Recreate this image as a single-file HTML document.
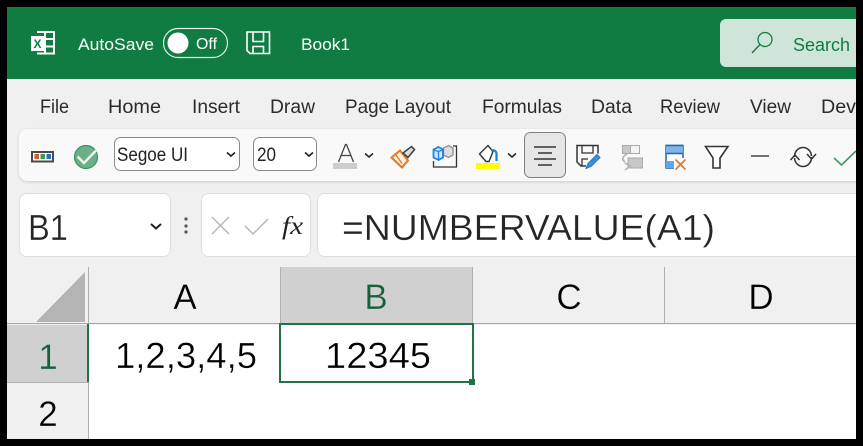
<!DOCTYPE html>
<html><head><meta charset="utf-8"><style>
html,body{margin:0;padding:0;background:#000;width:863px;height:446px;overflow:hidden}
svg{display:block}
text{font-family:"Liberation Sans",sans-serif}
</style></head><body>
<svg width="863" height="446" viewBox="0 0 863 446" xmlns="http://www.w3.org/2000/svg">
<defs>
<clipPath id="c"><rect x="7" y="7" width="849" height="432"/></clipPath>
<filter id="s" x="-5%" y="-20%" width="110%" height="150%"><feDropShadow dx="0" dy="1" stdDeviation="1.5" flood-color="#000" flood-opacity=".16"/></filter>
</defs>
<rect width="863" height="446" fill="#000"/>
<g clip-path="url(#c)">
<rect x="7" y="7" width="849" height="432" fill="#f0f0f0"/>
<rect x="7" y="7" width="849" height="72" fill="#107c41"/>

<!-- excel icon -->
<g fill="none" stroke="#fff" stroke-width="2">
<path d="M37 32h17v21.500H37"/><path d="M45 32v21.500M45 39h9M45 46.500h9"/>
</g>
<rect x="31" y="36" width="14" height="15" fill="#fff"/>
<text x="33.500" y="48" font-size="12" font-weight="700" fill="#107c41">X</text>

<text x="78" y="50" font-size="17" fill="#fff" textLength="76" lengthAdjust="spacingAndGlyphs">AutoSave</text>
<rect x="163.500" y="28.500" width="64" height="29" rx="14.500" fill="none" stroke="#e4f0e9" stroke-width="1.200"/>
<circle cx="178" cy="43" r="10.500" fill="#fff"/>
<text x="196" y="49" font-size="15.500" fill="#fff" textLength="21" lengthAdjust="spacingAndGlyphs">Off</text>
<!-- save -->
<g fill="none" stroke="#fff" stroke-width="1.600">
<path d="M247 32h22.500v21.500H250l-3-3z"/><path d="M253 32v9.500h10.500V32M253 53.500V46.500h10.500v7"/>
</g>
<text x="301" y="50" font-size="17" fill="#fff" textLength="49" lengthAdjust="spacingAndGlyphs">Book1</text>

<!-- search -->
<rect x="720" y="19" width="150" height="48" rx="6" fill="#cfe5d9"/>
<circle cx="765" cy="39.500" r="7" fill="none" stroke="#107c41" stroke-width="1.300"/>
<path d="M760 44.500l-8 8.500" stroke="#107c41" stroke-width="1.400" fill="none"/>
<text x="793" y="51" font-size="18.500" fill="#107c41" textLength="57" lengthAdjust="spacingAndGlyphs">Search</text>

<!-- tabs -->
<g font-size="19" fill="#2b2b2b">
<text x="40" y="113" textLength="29" lengthAdjust="spacingAndGlyphs">File</text>
<text x="108" y="113" textLength="53" lengthAdjust="spacingAndGlyphs">Home</text>
<text x="192" y="113" textLength="48" lengthAdjust="spacingAndGlyphs">Insert</text>
<text x="270" y="113" textLength="45" lengthAdjust="spacingAndGlyphs">Draw</text>
<text x="345" y="113" textLength="106" lengthAdjust="spacingAndGlyphs">Page Layout</text>
<text x="482" y="113" textLength="80" lengthAdjust="spacingAndGlyphs">Formulas</text>
<text x="591" y="113" textLength="41" lengthAdjust="spacingAndGlyphs">Data</text>
<text x="660" y="113" textLength="60" lengthAdjust="spacingAndGlyphs">Review</text>
<text x="750" y="113" textLength="41" lengthAdjust="spacingAndGlyphs">View</text>
<text x="821" y="113" textLength="35" lengthAdjust="spacingAndGlyphs">Dev</text>
</g>

<!-- toolbar -->
<rect x="19" y="129" width="860" height="52" rx="9" fill="#f9f9f9" filter="url(#s)"/>

<!-- icon 1 -->
<rect x="32" y="152" width="21" height="9.500" fill="#fff" stroke="#4a4a4a" stroke-width="2"/>
<rect x="34.500" y="154" width="4.500" height="5" fill="#c8622a"/>
<rect x="40.500" y="154" width="4.500" height="5" fill="#3e9a5a"/>
<rect x="46.500" y="154" width="4.500" height="5" fill="#2a72c0"/>
<!-- icon 2 -->
<circle cx="86" cy="157" r="11.500" fill="#6bb088" stroke="#3f9060" stroke-width="1.200"/>
<path d="M77.500 156.500l6.500 6.500L96 150.500" fill="none" stroke="#eef6f1" stroke-width="2.400"/>

<!-- selects -->
<rect x="114.500" y="137.500" width="125" height="33" rx="6" fill="#fff" stroke="#8a8a8a"/>
<text x="117" y="161" font-size="19.500" fill="#222" textLength="71" lengthAdjust="spacingAndGlyphs">Segoe UI</text>
<path d="M227 152.500l4 3.500 4-3.500" fill="none" stroke="#222" stroke-width="1.600"/>
<rect x="253.500" y="137.500" width="63" height="33" rx="6" fill="#fff" stroke="#8a8a8a"/>
<text x="257" y="161" font-size="19.500" fill="#222" textLength="19" lengthAdjust="spacingAndGlyphs">20</text>
<path d="M305 152.500l4 3.500 4-3.500" fill="none" stroke="#222" stroke-width="1.600"/>

<!-- font colour -->
<path d="M338.500 162l7-17.500h1l7 17.500M341 155.500h10" fill="none" stroke="#444" stroke-width="1.300"/>
<rect x="333" y="163" width="24" height="6" fill="#cdcdcd"/>
<path d="M365 153.500l4 3.500 4-3.500" fill="none" stroke="#222" stroke-width="1.500"/>
<!-- brush -->
<path d="M391.500 157.500l8.500-7 8 10-6 7z" fill="#fbeee2" stroke="#e07b22" stroke-width="2"/>
<path d="M396 155l6 8.500" stroke="#e07b22" stroke-width="1.300" fill="none"/>
<path d="M403 153l8.500-6.500 3 3-6.500 8z" fill="#ddd" stroke="#444" stroke-width="1.600"/>
<!-- 3D -->
<path d="M453 146h3.500v21h-23v-6" fill="none" stroke="#333" stroke-width="1.300"/>
<path d="M443.500 148l5-2.500 4.500 2.500v7l-4.500 2.500-5-2.500z" fill="#ddd" stroke="#9b8e9b" stroke-width="1.400"/>
<path d="M433.500 149.500l5-2.500 4.500 2.500v8l-4.500 2.500-5-2.500z" fill="#cfe4f7" stroke="#1f86d8" stroke-width="1.800"/>
<path d="M438.500 151v9M434 150l4.500 1.500 4-1.500" fill="none" stroke="#1f86d8" stroke-width="1.300"/>
<!-- fill -->
<path d="M479.500 154l8.500-8.500 5 6-4 10h-3z" fill="#fff" stroke="#333" stroke-width="1.400"/>
<path d="M496.500 161v-7c0-3-2.500-4.500-5.500-3.500" fill="none" stroke="#1a7fd0" stroke-width="2.200"/>
<rect x="476" y="163" width="24" height="6" fill="#ffff00"/>
<path d="M508 153.500l4 3.500 4-3.500" fill="none" stroke="#222" stroke-width="1.500"/>
<!-- align button -->
<rect x="524.500" y="132.500" width="41" height="45" rx="6" fill="#e6e6e6" stroke="#7f7f7f"/>
<path d="M534 147h22M538 153h14M534 159h22M538 165h14" stroke="#333" stroke-width="1.400" fill="none"/>
<!-- save edit -->
<path d="M586 166h-5l-4-4v-16.500h21v8" fill="none" stroke="#333" stroke-width="1.500"/>
<path d="M582 146v7h11v-7M582 166v-7h6" fill="none" stroke="#333" stroke-width="1.300"/>
<path d="M586 168.500l2-5 9-9 3 3-9 9z" fill="#3f8fd8" stroke="#2478c4" stroke-width="1"/>
<!-- relationships -->
<rect x="622.500" y="145.500" width="8" height="8" fill="#c8c8c8" stroke="#aaa"/>
<rect x="630.500" y="145.500" width="9" height="8" fill="#f3f3f3" stroke="#aaa"/>
<rect x="628" y="158" width="14.500" height="10" fill="#c8c8c8" stroke="#aaa"/>
<path d="M627 154c-4 2-6 5-2 8M625 170l5-4-5-3" fill="none" stroke="#b5b5b5" stroke-width="1.700"/>
<!-- delete table -->
<rect x="666" y="145.500" width="17" height="22.500" fill="#fff" stroke="#1e68b4" stroke-width="1.500"/>
<rect x="666" y="146" width="17" height="7.500" fill="#7fb4e8"/>
<path d="M666 145.500h17M666 153.500h17" stroke="#1e68b4" stroke-width="1.500"/>
<path d="M666 161h8l3.500 3.500-3.500 3.500h-8z" fill="#5fa8ea"/>
<rect x="674" y="158" width="13" height="13" fill="#f9f9f9"/>
<path d="M675.500 159.500l10 10M685.500 159.500l-10 10" stroke="#e07b22" stroke-width="1.700"/>
<!-- funnel -->
<path d="M705.500 146.500h22.500l-8 11.500v10h-7v-10z" fill="#fff" stroke="#333" stroke-width="1.600"/>
<!-- minus -->
<path d="M751 156h18" stroke="#444" stroke-width="1.500"/>
<!-- refresh -->
<path d="M794.500 157a8.500 9 0 0 1 17-1M811.500 157a8.500 9 0 0 1-17 1" fill="none" stroke="#333" stroke-width="1.500"/>
<path d="M790.500 160l4.500-5 4.500 5M807 154l4.500 5 4.500-5" fill="none" stroke="#333" stroke-width="1.500"/>
<path d="M834 158l7.500 7 14.500-14" fill="none" stroke="#3f9a66" stroke-width="1.700"/>

<!-- formula bar -->
<rect x="19.500" y="193.500" width="151" height="63" rx="7" fill="#fff" stroke="#dedede"/>
<text x="28" y="240" font-size="36" fill="#262626" textLength="40" lengthAdjust="spacingAndGlyphs" stroke="#fff" stroke-width=".3">B1</text>
<path d="M151 224l5 4.500 5-4.500" fill="none" stroke="#222" stroke-width="2"/>
<circle cx="186" cy="219" r="1.600" fill="#555"/><circle cx="186" cy="226" r="1.600" fill="#555"/><circle cx="186" cy="232" r="1.600" fill="#555"/>
<rect x="201.500" y="193.500" width="109" height="63" rx="7" fill="#fff" stroke="#dedede"/>
<path d="M212 217l17 17M229 217l-17 17" stroke="#b8b8b8" stroke-width="1.500"/>
<path d="M245 226l8 8 15-15" fill="none" stroke="#b8b8b8" stroke-width="1.500"/>
<text x="282" y="234" font-size="25" font-style="italic" fill="#222" style="font-family:'Liberation Serif',serif" textLength="21" lengthAdjust="spacingAndGlyphs">fx</text>
<rect x="317.500" y="193.500" width="600" height="63" rx="7" fill="#fff" stroke="#dedede"/>
<text x="342" y="240" font-size="36" fill="#262626" textLength="373" lengthAdjust="spacingAndGlyphs" stroke="#fff" stroke-width=".3">=NUMBERVALUE(A1)</text>

<!-- grid -->
<rect x="89" y="325" width="767" height="114" fill="#fff"/>
<rect x="281" y="267" width="192" height="57" fill="#d0d0d0"/>
<rect x="7" y="325" width="81" height="57" fill="#d0d0d0"/>
<path d="M85 272v50H36z" fill="#b4b4b4"/>
<path d="M88.500 267v172M280.500 267v57M472.500 267v57M664.500 267v57M7 382.500h81" stroke="#b0b0b0" fill="none"/>
<path d="M7 323.500h849" stroke="#a6a6a6" fill="none"/>
<g font-size="35" fill="#000" text-anchor="middle" stroke="#f0f0f0" stroke-width=".3">
<text x="185" y="309">A</text>
<text x="376" y="309" fill="#14623a" stroke="#d0d0d0">B</text>
<text x="569" y="309">C</text>
<text x="761" y="309">D</text>
<text x="48" y="369" fill="#14623a" stroke="#d0d0d0">1</text>
<text x="48" y="426">2</text>
</g>
<path d="M88 324v58" stroke="#217346" stroke-width="2"/>
<text x="115" y="368" font-size="36" fill="#000" textLength="142" lengthAdjust="spacingAndGlyphs" stroke="#fff" stroke-width=".35">1,2,3,4,5</text>
<text x="325" y="368" font-size="36" fill="#000" textLength="106" lengthAdjust="spacingAndGlyphs" stroke="#fff" stroke-width=".35">12345</text>
<rect x="280" y="324" width="193" height="58" fill="none" stroke="#217346" stroke-width="2"/>
<rect x="469" y="379" width="6" height="6" fill="#217346"/>
</g>
</svg>
</body></html>
